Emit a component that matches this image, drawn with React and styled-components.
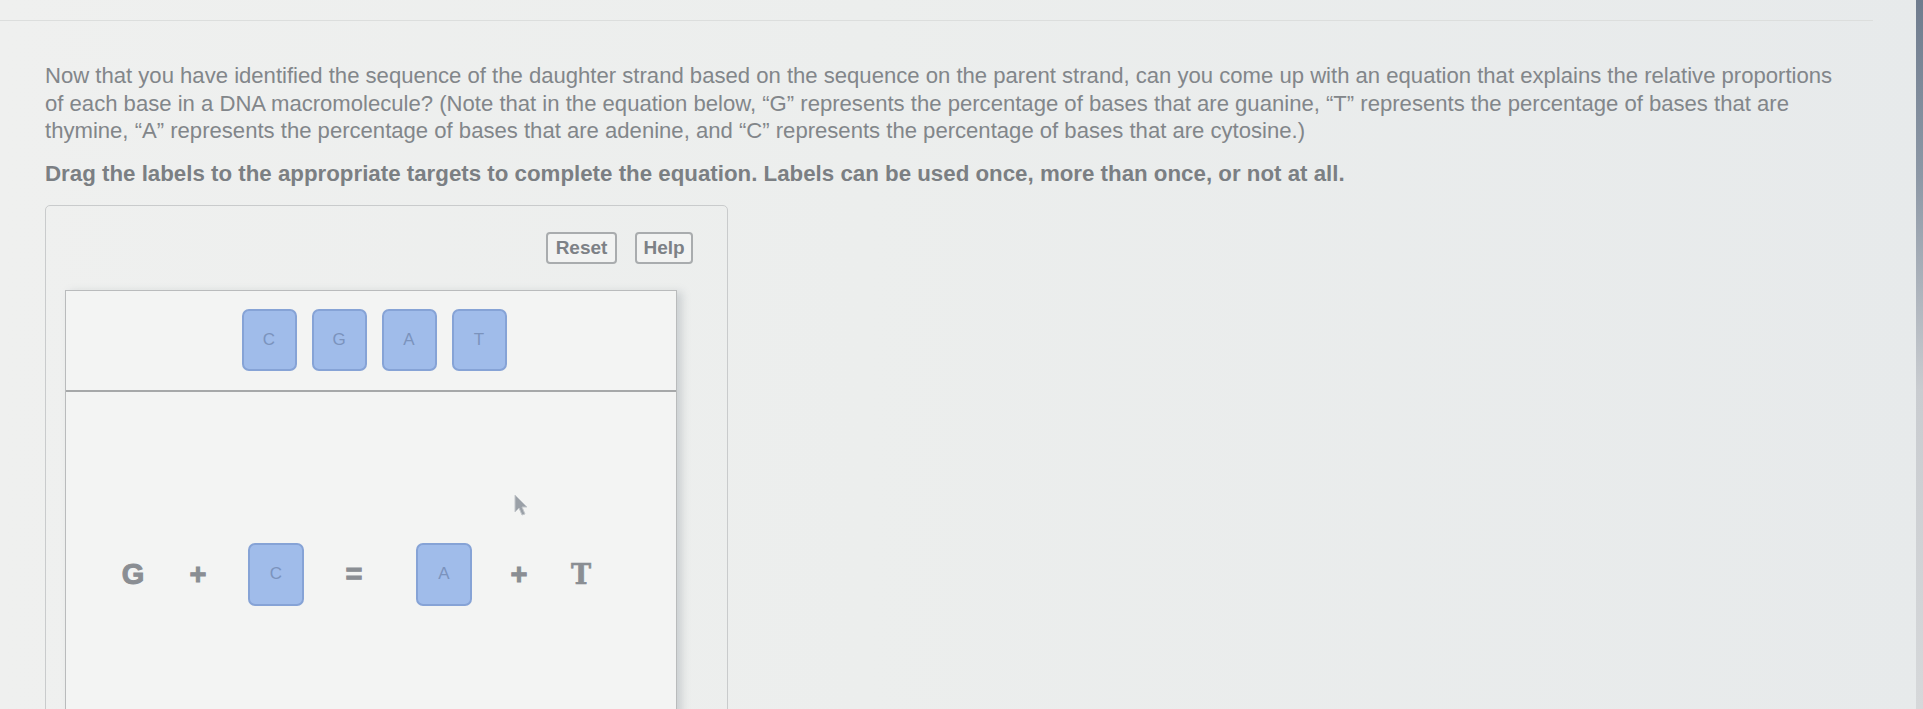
import React from "react";
import styled, { createGlobalStyle } from "styled-components";

const Global = createGlobalStyle`
  html, body { margin: 0; padding: 0; }
  body {
    background: linear-gradient(90deg, #eff0ef 0%, #eceeed 45%, #e7eaeb 100%);
    font-family: "Liberation Sans", Arial, sans-serif;
    overflow: hidden;
  }
`;

const Screen = styled.div`
  display: flex;
  width: 1923px;
  height: 709px;
  overflow: hidden;
`;

const Main = styled.div`
  flex: 1;
  display: flex;
  flex-direction: column;
  min-width: 0;
`;

const Bezel = styled.div`
  width: 7px;
  background: linear-gradient(180deg, #6f7c8e 0%, #8d98a6 25%, #c9ccd0 55%, #d6d8da 100%);
`;

const TopRule = styled.div`
  height: 20px;
  flex: none;
  margin-right: 43px;
  border-bottom: 1px solid #dcdedd;
`;

const Content = styled.div`
  padding: 41px 0 0 45px;
  display: flex;
  flex-direction: column;
  align-items: flex-start;
`;

const Prompt = styled.p`
  margin: 0;
  font-size: 22.1px;
  line-height: 27.5px;
  color: #82868a;
  white-space: nowrap;
`;

const Instruction = styled.p`
  margin: 15px 0 0;
  font-size: 22.3px;
  line-height: 27.5px;
  font-weight: 700;
  color: #7b7f83;
  white-space: nowrap;
`;

const Panel = styled.div`
  margin-top: 18px;
  width: 683px;
  height: 520px;
  box-sizing: border-box;
  border: 1px solid #c9cbcc;
  border-radius: 5px;
  padding: 26px 34px 0 19px;
  display: flex;
  flex-direction: column;
  position: relative;
`;

const Toolbar = styled.div`
  display: flex;
  justify-content: flex-end;
  gap: 18px;
`;

const ToolButton = styled.button`
  height: 32px;
  width: ${(p) => p.$w}px;
  box-sizing: border-box;
  border: 2px solid #a9acae;
  border-radius: 4px;
  background: #f2f3f2;
  color: #7d8186;
  font-family: "Liberation Sans", Arial, sans-serif;
  font-weight: 700;
  font-size: 19px;
  padding: 0;
  display: flex;
  align-items: center;
  justify-content: center;
`;

const Board = styled.div`
  margin-top: 26px;
  width: 612px;
  flex: 1;
  box-sizing: border-box;
  border: 1px solid #b9bbbc;
  border-bottom: none;
  background: #f3f4f3;
  box-shadow: 5px 2px 8px rgba(120, 128, 140, 0.28);
  display: flex;
  flex-direction: column;
`;

const Bank = styled.div`
  height: 101px;
  flex: none;
  box-sizing: border-box;
  border-bottom: 2px solid #a6a8a9;
  display: flex;
  justify-content: center;
  align-items: center;
  gap: 15px;
  padding: 0 0 2px 6px;
`;

const Tile = styled.div`
  width: 55px;
  height: 62px;
  box-sizing: border-box;
  border: 2px solid #86a3d6;
  border-radius: 7px;
  background: #a0bcea;
  color: #7b93bd;
  font-size: 17px;
  display: flex;
  align-items: center;
  justify-content: center;
`;

const EquationArea = styled.div`
  flex: 1;
  padding: 150px 0 0 52px;
`;

const Equation = styled.div`
  display: flex;
  align-items: center;
  gap: 35px;
  height: 64px;
`;

const Term = styled.span`
  width: 30px;
  text-align: center;
  font-family: ${(p) => (p.$serif ? '"DejaVu Serif", "Liberation Serif", serif' : '"Liberation Sans", Arial, sans-serif')};
  font-weight: 700;
  font-size: ${(p) => (p.$serif ? 27 : 29)}px;
  color: #8a8e93;
  -webkit-text-stroke: ${(p) => (p.$serif ? 0.6 : 1)}px #8a8e93;
  margin-right: ${(p) => (p.$extra ? 12 : 0)}px;
  margin-left: ${(p) => (p.$shift ? -3 : 0)}px;
`;

const Target = styled(Tile)`
  width: 56px;
  height: 63px;
`;

const Cursor = styled.svg`
  position: absolute;
  left: 467px;
  top: 288px;
`;

export default function App() {
  return (
    <Screen>
      <Global />
      <Main>
        <TopRule />
        <Content>
          <Prompt>
            Now that you have identified the sequence of the daughter strand based on the sequence on the parent strand, can you come up with an equation that explains the relative proportions
            <br />
            of each base in a DNA macromolecule? (Note that in the equation below, “G” represents the percentage of bases that are guanine, “T” represents the percentage of bases that are
            <br />
            thymine, “A” represents the percentage of bases that are adenine, and “C” represents the percentage of bases that are cytosine.)
          </Prompt>
          <Instruction>
            Drag the labels to the appropriate targets to complete the equation. Labels can be used once, more than once, or not at all.
          </Instruction>
          <Panel>
            <Toolbar>
              <ToolButton $w={71}>Reset</ToolButton>
              <ToolButton $w={58}>Help</ToolButton>
            </Toolbar>
            <Board>
              <Bank>
                <Tile>C</Tile>
                <Tile>G</Tile>
                <Tile>A</Tile>
                <Tile>T</Tile>
              </Bank>
              <EquationArea>
                <Equation>
                  <Term>G</Term>
                  <Term>+</Term>
                  <Target>C</Target>
                  <Term $extra>=</Term>
                  <Target>A</Target>
                  <Term $shift>+</Term>
                  <Term $serif $shift>T</Term>
                </Equation>
              </EquationArea>
            </Board>
            <Cursor width="16" height="24" viewBox="0 0 16 24">
              <path d="M2 1 L2 18 L6 14 L9 21 L12 20 L9 13 L14 13 Z" fill="#9aa0a7" stroke="#c2c6ca" strokeWidth="1" />
            </Cursor>
          </Panel>
        </Content>
      </Main>
      <Bezel />
    </Screen>
  );
}
